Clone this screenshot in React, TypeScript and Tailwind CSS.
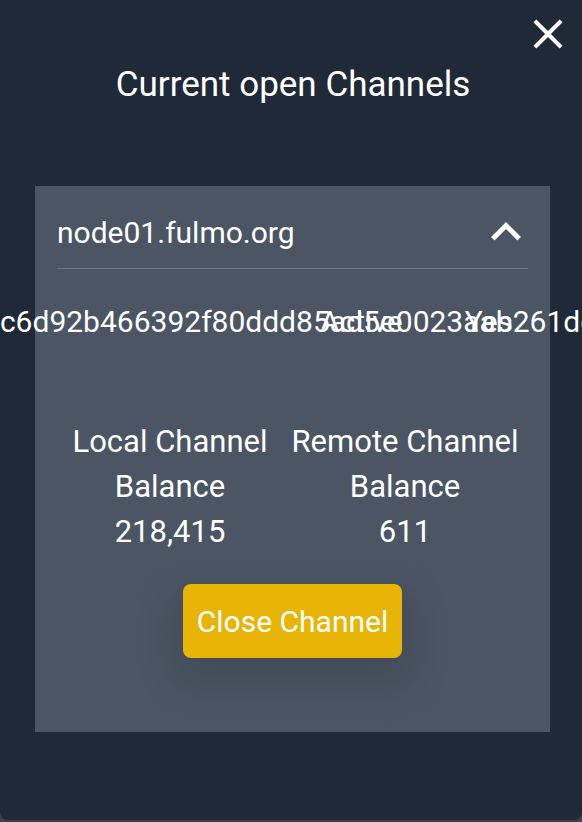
import React from "react";

const HEX =
  "e1f0a7b3d94c2e8f6a01b45c6d92b466392f80ddd85ad5e0023aab261dc4f07";

export default function App() {
  return (
    <div
      className="w-full h-[822px] overflow-hidden bg-[#3a4250] text-white"
      style={{ fontFamily: "Roboto, 'Noto Sans', sans-serif" }}
    >
      <div className="relative h-[820px] bg-[#1f2937] rounded-b-[8px] flex flex-col">
        <button className="absolute top-[9px] right-[9px] w-[50px] h-[50px]">
          <svg viewBox="0 0 24 24" className="w-[50px] h-[50px]" fill="#ffffff">
            <path d="M19 6.41 17.59 5 12 10.59 6.41 5 5 6.41 10.59 12 5 17.59 6.41 19 12 13.41 17.59 19 19 17.59 13.41 12z" />
          </svg>
        </button>

        <h1 className="pt-[64px] pl-[4px] text-[35px] leading-[42px] font-normal text-center">
          Current open Channels
        </h1>

        <div className="mt-[80px] ml-[35px] w-[515px] bg-[#4b5563] pb-[74px] flex flex-col">
          <div className="flex items-center justify-between pl-[22px] pr-[14px] pt-[16px] pb-[6px]">
            <span className="text-[30px] leading-[45px]">node01.fulmo.org</span>
            <svg viewBox="0 0 24 24" className="w-[60px] h-[60px]" fill="#ffffff">
              <path d="M12 8l-6 6 1.41 1.41L12 10.83l4.59 4.58L18 14z" />
            </svg>
          </div>
          <div className="mx-[22px] h-px bg-[#6b7280]" />

          <div className="mt-[30px] flex pl-[22px] text-[30px] leading-[45px]">
            <div className="w-[172px] shrink-0 flex justify-center">
              <span className="whitespace-nowrap">{HEX}</span>
            </div>
            <span className="ml-[91px] whitespace-nowrap">Active</span>
            <span className="ml-[62px] whitespace-nowrap">Yes</span>
          </div>

          <div className="mt-[75px] flex pl-[17px] text-[31px] leading-[45px] text-center">
            <div className="w-[236px] flex flex-col items-center">
              <span>Local Channel Balance</span>
              <span>218,415</span>
            </div>
            <div className="w-[234px] flex flex-col items-center">
              <span>Remote Channel Balance</span>
              <span>611</span>
            </div>
          </div>

          <div className="mt-[30px] flex justify-center">
            <button className="h-[74px] px-[14px] flex items-center rounded-[8px] bg-[#e8b406] text-white text-[30px] leading-[45px] shadow-[0_18px_40px_12px_rgba(0,0,0,0.10)]">
              Close Channel
            </button>
          </div>
        </div>
      </div>
    </div>
  );
}
